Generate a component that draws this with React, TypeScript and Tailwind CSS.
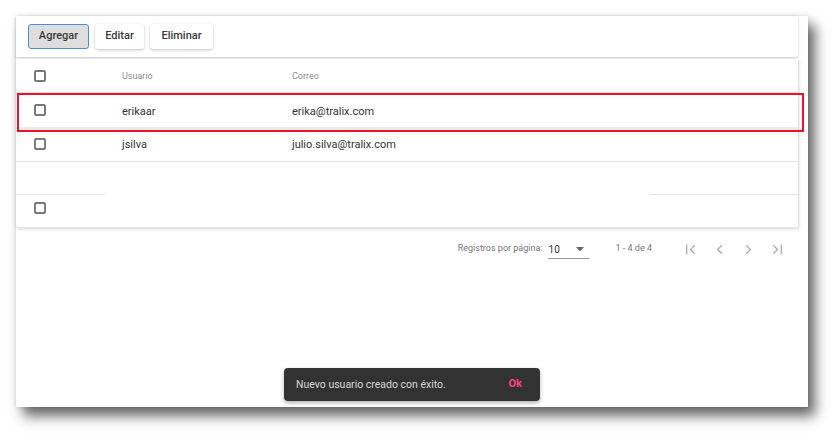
import React from "react";

function Checkbox() {
  return <div className="w-[12px] h-[12px] border-2 border-[#7a7a7a] rounded-[2px] bg-white" />;
}

function Icon({ d }: { d: string }) {
  return (
    <div className="w-[24px] h-[24px] flex items-center justify-center">
      <svg width="15" height="15" viewBox="0 0 24 24" fill="none" stroke="#aaaaaa" strokeWidth="2" strokeLinecap="square">
        <path d={d} />
      </svg>
    </div>
  );
}

export default function App() {
  return (
    <div className="w-[839px] h-[438px] bg-white overflow-hidden pt-[16px] pl-[16px]" style={{ fontFamily: "Roboto, 'Liberation Sans', sans-serif" }}>
      <div className="relative w-[792px] h-[391px] bg-white shadow-[7px_9px_12px_rgba(0,0,0,0.6),0_0_5px_rgba(0,0,0,0.12)] flex flex-col">
        {/* toolbar */}
        <div className="w-[782px] h-[41px] bg-white shadow-[0_1px_3px_rgba(0,0,0,0.22)] rounded-br-[3px] flex items-center pl-[12px] gap-[6px]">
          <button className="w-[61px] h-[25px] bg-[#dedede] border border-[#4a8fd6] rounded-[3px] text-[11px] font-medium text-[#3a3a3a]">Agregar</button>
          <button className="w-[49px] h-[25px] bg-white shadow-[0_1px_3px_rgba(0,0,0,0.25)] rounded-[3px] text-[11px] font-medium text-[#3a3a3a]">Editar</button>
          <button className="w-[63px] h-[25px] bg-white shadow-[0_1px_3px_rgba(0,0,0,0.25)] rounded-[3px] text-[11px] font-medium text-[#3a3a3a]">Eliminar</button>
        </div>
        {/* table */}
        <div className="mt-[2px] w-[782px] bg-white shadow-[1px_1px_3px_rgba(0,0,0,0.18)] flex flex-col">
          <div className="h-[34px] flex items-center border-b border-[#e6e6e6]">
            <div className="w-[106px] pl-[18px] flex items-center"><Checkbox /></div>
            <div className="w-[170px] pt-[2px] text-[9px] text-[#8a8a8a]">Usuario</div>
            <div className="pt-[2px] text-[9px] text-[#8a8a8a]">Correo</div>
          </div>
          <div className="h-[37px] flex items-center border-b-[3px] border-[#ececec]">
            <div className="w-[106px] pl-[18px] flex items-center"><Checkbox /></div>
            <div className="w-[170px] pt-[4px] text-[11px] text-[#333]">erikaar</div>
            <div className="pt-[4px] text-[11px] text-[#333]">erika@tralix.com</div>
          </div>
          <div className="h-[32px] flex items-center border-b border-[#e6e6e6]">
            <div className="w-[106px] pl-[18px] pb-[4px] flex items-center"><Checkbox /></div>
            <div className="w-[170px] text-[11px] text-[#333]">jsilva</div>
            <div className="text-[11px] text-[#333]">julio.silva@tralix.com</div>
          </div>
          <div className="h-[33px] flex items-end justify-between">
            <div className="w-[90px] h-[1px] bg-[#e6e6e6]" />
            <div className="w-[148px] h-[1px] bg-[#e6e6e6]" />
          </div>
          <div className="h-[33px] flex items-center border-b border-[#e6e6e6]">
            <div className="w-[106px] pl-[18px] pb-[6px] flex items-center"><Checkbox /></div>
          </div>
        </div>
        {/* pagination */}
        <div className="w-[782px] h-[38px] pt-[4px] flex items-center justify-end pr-[9px]">
          <span className="text-[9px] text-[#777]">Registros por página:</span>
          <div className="ml-[5px] w-[41px] h-[17px] border-b border-[#9a9a9a] flex items-center justify-between pl-[1px] pr-[5px] mt-[2px]">
            <span className="text-[10px] text-[#333]">10</span>
            <svg width="8" height="5" viewBox="0 0 8 5"><path d="M0 0 L8 0 L4 4.5 Z" fill="#666" /></svg>
          </div>
          <span className="ml-[27px] text-[9px] text-[#777]">1 - 4 de 4</span>
          <div className="ml-[26px] flex gap-[5px]">
            <Icon d="M6 5 V19 M18 6 L12 12 L18 18" />
            <Icon d="M15 6 L9 12 L15 18" />
            <Icon d="M9 6 L15 12 L9 18" />
            <Icon d="M18 5 V19 M6 6 L12 12 L6 18" />
          </div>
        </div>
        {/* red annotation */}
        <div className="absolute left-[1px] top-[77px] w-[787px] h-[39px] border-2 border-[#f0102c]" />
        {/* snackbar */}
        <div className="absolute bottom-[6px] left-1/2 -translate-x-1/2 w-[256px] h-[33px] bg-[#323232] rounded-[4px] shadow-[0_2px_4px_rgba(0,0,0,0.3)] flex items-center justify-between pl-[12px] pr-[18px]">
          <span className="text-[10.5px] text-[#d8d8d8]">Nuevo usuario creado con éxito.</span>
          <span className="text-[11px] font-bold text-[#ff4081]">Ok</span>
        </div>
      </div>
    </div>
  );
}
